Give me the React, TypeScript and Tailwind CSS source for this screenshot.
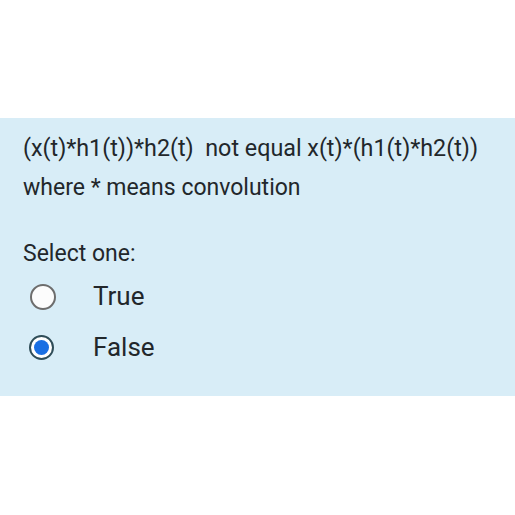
export default function App() {
  return (
    <div className="w-[515px] h-[515px] bg-white overflow-hidden font-['Roboto',sans-serif] text-[#22272b]">
      <div className="mt-[118px] h-[278px] bg-[#d8edf7] pl-[23px] pt-[10px]">
        <div className="text-[23.3px] leading-[40px] whitespace-pre">(x(t)*h1(t))*h2(t)  not equal x(t)*(h1(t)*h2(t))</div>
        <div className="text-[23px] leading-[40px]">where * means convolution</div>
        <div className="mt-[29px] text-[23px] leading-[34px]">Select one:</div>
        <div className="flex flex-col">
          <label className="flex items-center h-[51px]">
            <span className="ml-[7px] w-[26px] h-[26px] rounded-full border-2 border-[#6d6d6d] bg-[#fcfcfc]" />
            <span className="ml-[37px] text-[26px] leading-[51px]">True</span>
          </label>
          <label className="flex items-center h-[51px]">
            <span className="ml-[6px] w-[25px] h-[25px] rounded-full border-2 border-[#2f4d58] bg-white flex items-center justify-center">
              <span className="w-[15px] h-[15px] rounded-full bg-[#1a6fe3]" />
            </span>
            <span className="ml-[39px] text-[26px] leading-[51px]">False</span>
          </label>
        </div>
      </div>
    </div>
  )
}
